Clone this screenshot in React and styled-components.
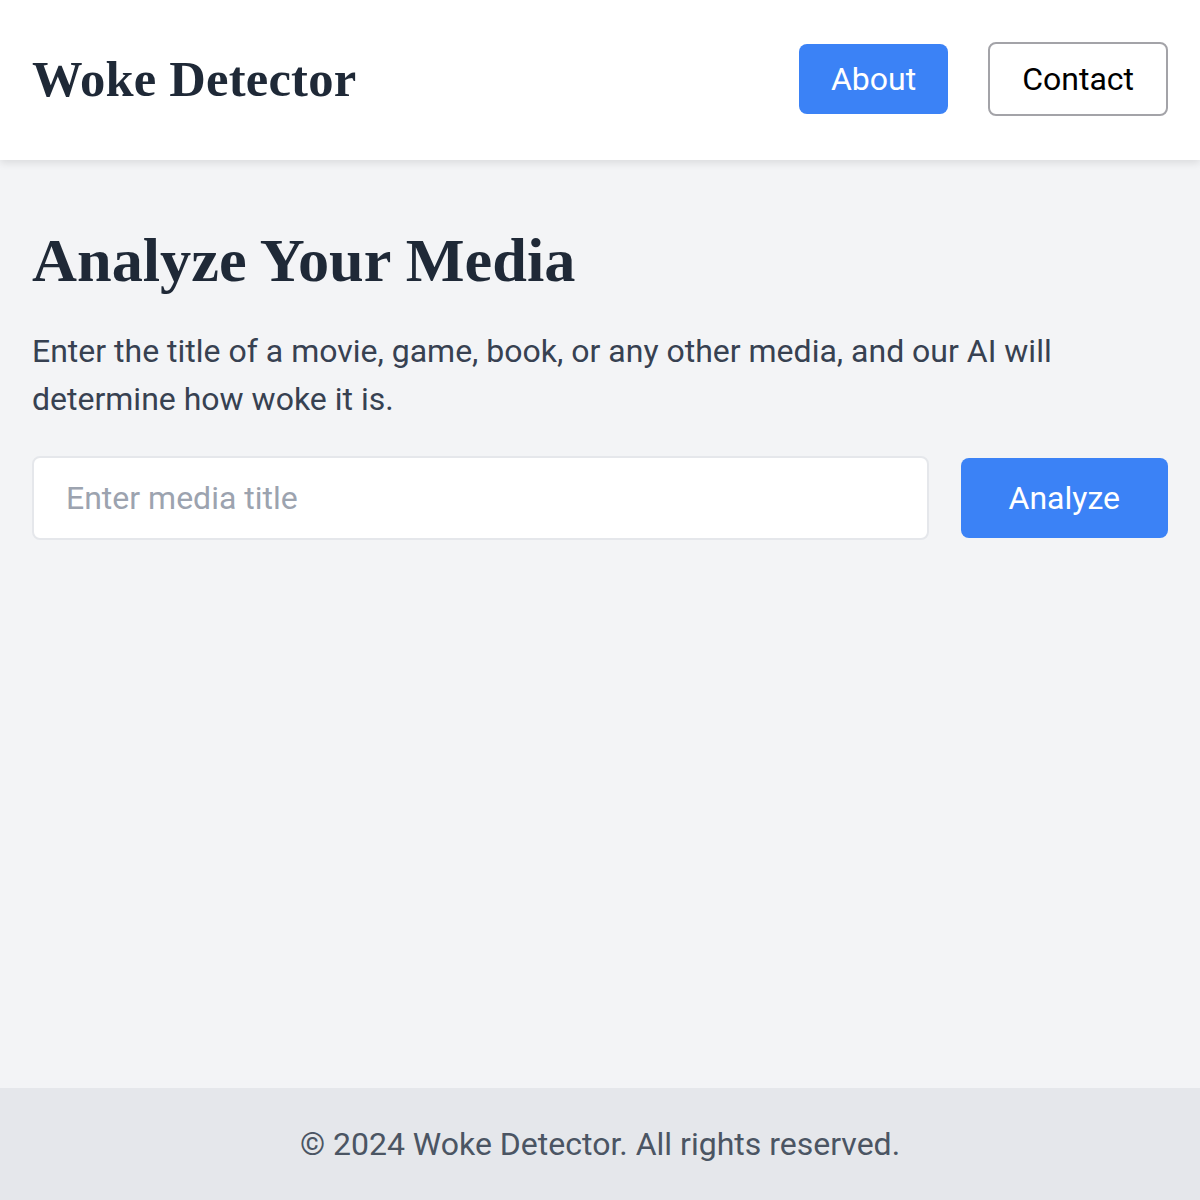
import React from "react";
import styled, { createGlobalStyle } from "styled-components";

const GlobalStyle = createGlobalStyle`
  html, body { margin: 0; padding: 0; }
  body {
    font-family: Roboto, "Liberation Sans", Arial, sans-serif;
    background: #f3f4f6;
  }
  * { box-sizing: border-box; }
`;

const Page = styled.div`
  display: flex;
  flex-direction: column;
  min-height: 1200px;
`;

const Header = styled.header`
  position: relative;
  z-index: 1;
  height: 160px;
  padding: 0 32px 2px;
  display: flex;
  align-items: center;
  justify-content: space-between;
  background: #ffffff;
  box-shadow: 0 3px 8px rgba(0, 0, 0, 0.1);
`;

const Logo = styled.h1`
  margin: 0;
  font-family: "Liberation Serif", "Times New Roman", serif;
  font-weight: 700;
  font-size: 50.6px;
  line-height: 64px;
  color: #1f2937;
  letter-spacing: 0.2px;
`;

const Nav = styled.nav`
  display: flex;
  align-items: center;
  gap: 40px;
`;

const NavButton = styled.button`
  font-family: Roboto, "Liberation Sans", Arial, sans-serif;
  font-size: 32px;
  line-height: normal;
  border-radius: 8px;
  cursor: pointer;
  background: ${(p) => (p.$primary ? "#3b82f6" : "#ffffff")};
  color: ${(p) => (p.$primary ? "#ffffff" : "#000000")};
  border: ${(p) => (p.$primary ? "none" : "2px solid #a3a3a8")};
  padding: 16px 32px;
`;

const Main = styled.main`
  flex: 1;
  padding: 64px 32px 32px;
  display: flex;
  flex-direction: column;
`;

const Title = styled.h2`
  margin: 0 0 31px;
  font-family: "Liberation Serif", "Times New Roman", serif;
  font-weight: 700;
  font-size: 62.3px;
  line-height: 72px;
  color: #1f2937;
`;

const Lead = styled.p`
  margin: 0 0 33px;
  font-size: 32px;
  line-height: 48px;
  color: #374151;
  max-width: 1040px;
`;

const Form = styled.form`
  display: flex;
  align-items: center;
  gap: 32px;
`;

const Input = styled.input`
  flex: 1;
  height: 84px;
  padding: 16px 32px;
  font-family: Roboto, "Liberation Sans", Arial, sans-serif;
  font-size: 32px;
  line-height: 48px;
  color: #1f2937;
  background: #ffffff;
  border: 2px solid #e5e7eb;
  border-radius: 8px;
  outline: none;
  &::placeholder { color: #9ca3af; }
`;

const Submit = styled.button`
  height: 80px;
  padding: 0 48px;
  font-family: Roboto, "Liberation Sans", Arial, sans-serif;
  font-size: 32px;
  line-height: 48px;
  color: #ffffff;
  background: #3b82f6;
  border: none;
  border-radius: 8px;
  cursor: pointer;
`;

const Footer = styled.footer`
  height: 112px;
  display: flex;
  align-items: center;
  justify-content: center;
  background: #e5e7eb;
  color: #4b5563;
  font-size: 32px;
  line-height: 48px;
`;

export default function App() {
  return (
    <>
      <GlobalStyle />
      <Page>
        <Header>
          <Logo>Woke Detector</Logo>
          <Nav>
            <NavButton $primary>About</NavButton>
            <NavButton>Contact</NavButton>
          </Nav>
        </Header>
        <Main>
          <Title>Analyze Your Media</Title>
          <Lead>
            Enter the title of a movie, game, book, or any other media, and our AI will
            determine how woke it is.
          </Lead>
          <Form onSubmit={(e) => e.preventDefault()}>
            <Input type="text" placeholder="Enter media title" />
            <Submit type="submit">Analyze</Submit>
          </Form>
        </Main>
        <Footer>© 2024 Woke Detector. All rights reserved.</Footer>
      </Page>
    </>
  );
}
